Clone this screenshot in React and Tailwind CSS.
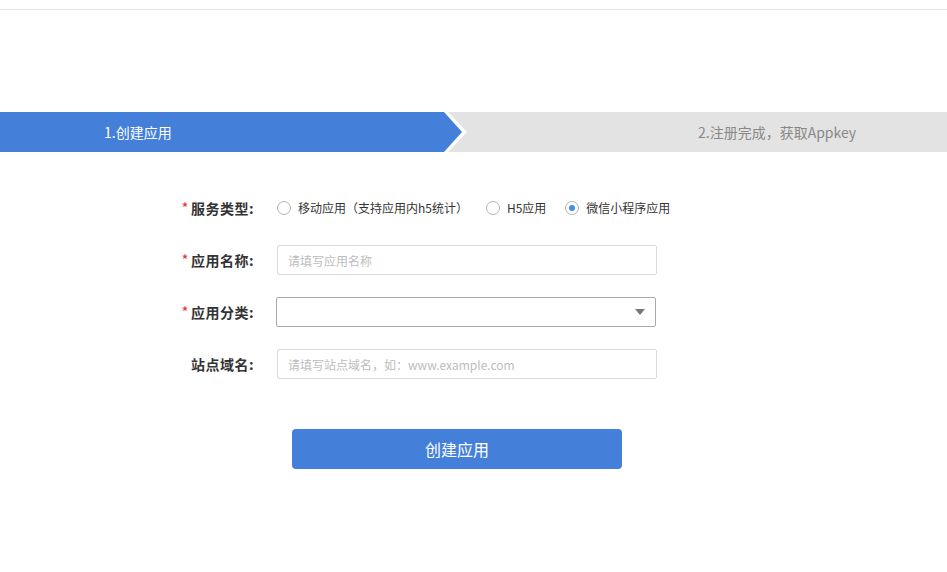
import React, { useState } from 'react';

const FONT = "font-['Noto_Sans_CJK_SC','Noto_Sans',sans-serif]";

function Label({ required, children }) {
  return (
    <div className="w-[254px] shrink-0 text-right text-[14px] leading-[30px] font-bold text-[#333] tracking-[0.5px]">
      {required && <span className="font-normal text-[15px] text-[#e4393c] mr-[2px]">*</span>}
      {children}:
    </div>
  );
}

function Radio({ checked, label, onClick, className = '' }) {
  return (
    <label onClick={onClick} className={`flex items-center cursor-pointer ${className}`}>
      <span className="w-[14px] h-[14px] rounded-full border border-[#b5b5b5] bg-white flex items-center justify-center">
        {checked && <span className="w-[6px] h-[6px] rounded-full bg-[#3d8fe8]" />}
      </span>
      <span className="ml-[7px] text-[12px] text-[#333]">{label}</span>
    </label>
  );
}

export default function App() {
  const [type, setType] = useState('mini');

  return (
    <div className={`${FONT} w-[947px] h-[572px] bg-white overflow-hidden`}>
      {/* top header line */}
      <div className="h-[10px] border-b border-[#e6e6e6]" />

      {/* steps */}
      <div className="mt-[102px] flex h-[40px] bg-[#e3e3e3]">
        <div className="w-[444px] bg-[#447fd9] text-white text-[14px] leading-[40px] pl-[104px]">
          1.创建应用
        </div>
        <svg width="24" height="40" viewBox="0 0 24 40" className="shrink-0">
          <polygon points="0,0 4,0 23,20 4,40 0,40" fill="#ffffff" />
          <polygon points="0,0 18,20 0,40" fill="#447fd9" />
        </svg>
        <div className="flex-1 text-[14px] leading-[40px] text-[#888] pl-[230px]">
          2.注册完成，获取Appkey
        </div>
      </div>

      {/* form */}
      <div className="mt-[41px] flex flex-col gap-[22px]">
        <div className="flex items-center h-[30px]">
          <Label required>服务类型</Label>
          <div className="ml-[23px] flex items-center">
            <Radio
              label="移动应用（支持应用内h5统计）"
              checked={type === 'mobile'}
              onClick={() => setType('mobile')}
              className="mr-[18px]"
            />
            <Radio
              label="H5应用"
              checked={type === 'h5'}
              onClick={() => setType('h5')}
              className="mr-[19px]"
            />
            <Radio
              label="微信小程序应用"
              checked={type === 'mini'}
              onClick={() => setType('mini')}
            />
          </div>
        </div>

        <div className="flex items-center h-[30px]">
          <Label required>应用名称</Label>
          <input
            placeholder="请填写应用名称"
            className="ml-[23px] w-[380px] h-[30px] border border-[#d9d9d9] rounded-[2px] px-[10px] text-[12px] text-[#333] placeholder:text-[#bdbdbd] outline-none"
          />
        </div>

        <div className="flex items-center h-[30px]">
          <Label required>应用分类</Label>
          <div className="ml-[22px] w-[380px] h-[30px] border border-[#a9a9a9] rounded-[2px] bg-white flex items-center justify-end pr-[10px]">
            <svg width="10" height="6" viewBox="0 0 10 6">
              <polygon points="0,0 10,0 5,6" fill="#777" />
            </svg>
          </div>
        </div>

        <div className="flex items-center h-[30px]">
          <Label>站点域名</Label>
          <input
            placeholder="请填写站点域名，如：www.example.com"
            className="ml-[23px] w-[380px] h-[30px] border border-[#d9d9d9] rounded-[2px] px-[10px] text-[12px] text-[#333] placeholder:text-[#bdbdbd] outline-none"
          />
        </div>
      </div>

      <div className="mt-[50px] pl-[292px]">
        <button className="w-[330px] h-[40px] rounded-[4px] bg-[#447fd9] text-white text-[16px]">
          创建应用
        </button>
      </div>
    </div>
  );
}
